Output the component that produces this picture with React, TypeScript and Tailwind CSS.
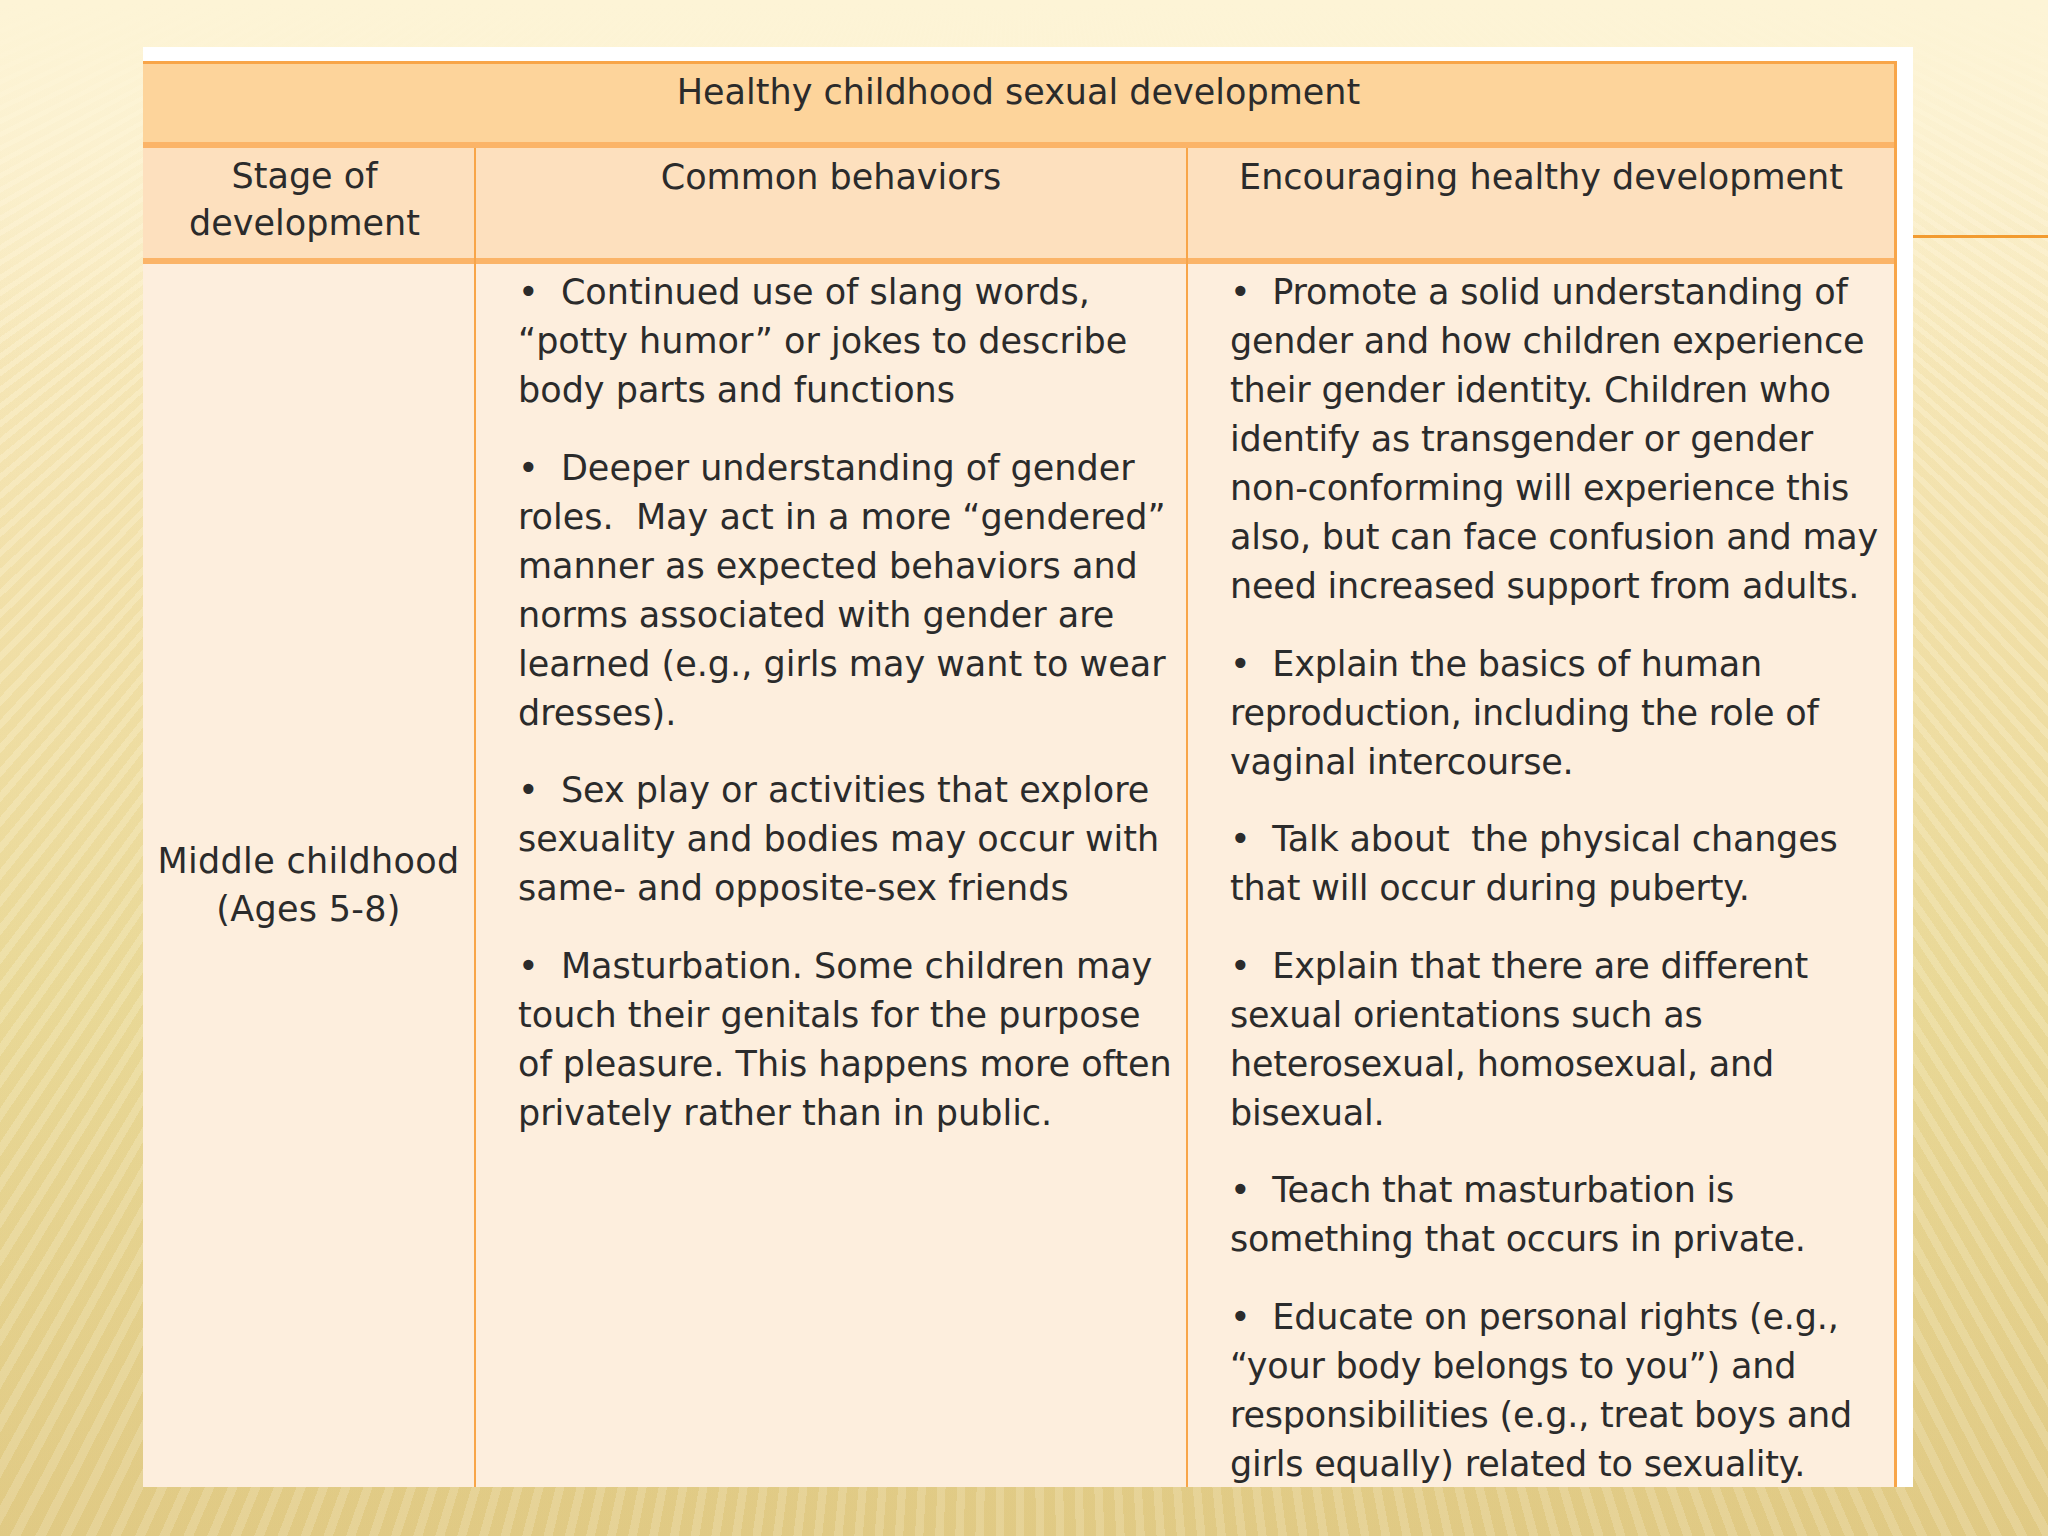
const col2: string[][] = [
  [
    "•  Continued use of slang words,",
    "“potty humor” or jokes to describe",
    "body parts and functions",
  ],
  [
    "•  Deeper understanding of gender",
    "roles.  May act in a more “gendered”",
    "manner as expected behaviors and",
    "norms associated with gender are",
    "learned (e.g., girls may want to wear",
    "dresses).",
  ],
  [
    "•  Sex play or activities that explore",
    "sexuality and bodies may occur with",
    "same- and opposite-sex friends",
  ],
  [
    "•  Masturbation. Some children may",
    "touch their genitals for the purpose",
    "of pleasure. This happens more often",
    "privately rather than in public.",
  ],
];

const col3: string[][] = [
  [
    "•  Promote a solid understanding of",
    "gender and how children experience",
    "their gender identity. Children who",
    "identify as transgender or gender",
    "non-conforming will experience this",
    "also, but can face confusion and may",
    "need increased support from adults.",
  ],
  [
    "•  Explain the basics of human",
    "reproduction, including the role of",
    "vaginal intercourse.",
  ],
  ["•  Talk about  the physical changes", "that will occur during puberty."],
  [
    "•  Explain that there are different",
    "sexual orientations such as",
    "heterosexual, homosexual, and",
    "bisexual.",
  ],
  ["•  Teach that masturbation is", "something that occurs in private."],
  [
    "•  Educate on personal rights (e.g.,",
    "“your body belongs to you”) and",
    "responsibilities (e.g., treat boys and",
    "girls equally) related to sexuality.",
  ],
];

function Items({ items }: { items: string[][] }) {
  return (
    <div className="flex flex-col gap-[28.5px]">
      {items.map((lines, i) => (
        <div key={i}>
          {lines.map((l, j) => (
            <div key={j} className="whitespace-pre">
              {l}
            </div>
          ))}
        </div>
      ))}
    </div>
  );
}

function Table() {
  return (
    <div className="w-[1754px] border-t-[3px] border-r-[3px] border-[#f8a548] text-[35px] leading-[49px]">
      <div className="h-[78px] bg-[#fdd49b] text-center pt-[4px]">
        Healthy childhood sexual development
      </div>
      <div className="h-[6px] bg-[#fbb468]" />
      <div className="grid grid-cols-[331px_712px_708px] h-[110px] bg-[#fde0be]">
        <div className="text-center pt-[5px] pr-[8px] leading-[47px]">
          Stage of
          <br />
          development
        </div>
        <div className="border-l-2 border-[#f8a548] text-center pt-[5px]">
          Common behaviors
        </div>
        <div className="border-l-2 border-[#f8a548] text-center pt-[5px]">
          Encouraging healthy development
        </div>
      </div>
      <div className="grid grid-cols-[331px_712px_708px]">
        <div className="h-[6px] bg-[#fbb468]" />
        <div className="h-[6px] bg-[#fbb468] border-l-2 border-[#f8a548]" />
        <div className="h-[6px] bg-[#fbb468] border-l-2 border-[#f8a548]" />
      </div>
      <div className="grid grid-cols-[331px_712px_708px] h-[1300px] bg-[#fdeedd]">
        <div className="text-center pt-[573px] leading-[48.3px] tracking-[0.3px]">
          Middle childhood
          <br />
          (Ages 5-8)
        </div>
        <div className="border-l-2 border-[#f8a548] pt-[4px] pl-[42px]">
          <Items items={col2} />
        </div>
        <div className="border-l-2 border-[#f8a548] pt-[4px] pl-[42px] tracking-[-0.2px]">
          <Items items={col3} />
        </div>
      </div>
    </div>
  );
}

export default function App() {
  return (
    <div className="w-[2048px] h-[1536px] overflow-hidden flex items-start font-['DejaVu_Sans',sans-serif] text-[#2b2b2b] bg-[image:linear-gradient(to_bottom,rgba(253,244,214,1)_0%,rgba(253,244,214,0.85)_4%,rgba(253,244,214,0)_24%),repeating-conic-gradient(from_0deg_at_50%_-25%,rgba(255,255,255,0.13)_0deg_0.25deg,rgba(170,130,40,0.03)_0.25deg_0.6deg),linear-gradient(to_bottom,#fdf3d2_0%,#f9ebbf_18%,#f3e2ab_40%,#ebdb9a_65%,#e2cc87_100%)]">
      <div className="ml-[143px] mt-[47px] w-[1770px] h-[1440px] shrink-0 bg-white pt-[14px] pr-[16px] overflow-hidden">
        <Table />
      </div>
      <div className="flex-1 mt-[235px] h-[3px] bg-[#f29b30]" />
    </div>
  );
}
